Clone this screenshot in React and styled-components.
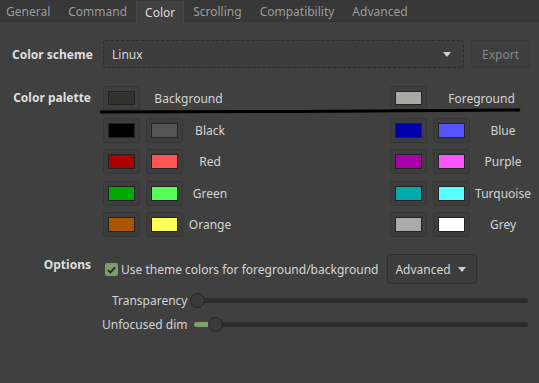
import React from "react";
import styled, { createGlobalStyle } from "styled-components";

const GlobalStyle = createGlobalStyle`
  html, body {
    margin: 0;
    padding: 0;
    background: #404040;
  }
  body {
    width: 539px;
    height: 383px;
    overflow: hidden;
    font-family: "Noto Sans", "Open Sans", sans-serif;
    font-size: 12px;
    color: #d2d2d2;
  }
`;

const Page = styled.div`
  position: relative;
  width: 539px;
  height: 383px;
  background: #404040;
  white-space: nowrap;
`;

const TabBar = styled.div`
  display: flex;
  height: 22px;
  background: #373737;
  border-bottom: 1px solid #343434;
  box-sizing: border-box;
`;

const Tab = styled.div`
  display: flex;
  align-items: center;
  padding: 0 8px;
  margin-top: 1px;
  color: ${({ $active }) => ($active ? "#dcdcdc" : "#9c9c9c")};
  background: ${({ $active }) => ($active ? "#404040" : "transparent")};
  border-left: 1px solid ${({ $active }) => ($active ? "#474747" : "transparent")};
  border-right: 1px solid ${({ $active }) => ($active ? "#474747" : "transparent")};
  margin-bottom: ${({ $active }) => ($active ? "-1px" : "0")};
  height: ${({ $active }) => ($active ? "22px" : "21px")};
  box-sizing: border-box;
  font-size: 12px;
  &:first-child {
    padding-left: 5px;
  }
`;

const Form = styled.div`
  display: grid;
  grid-template-columns: 79px 1fr;
  column-gap: 12px;
  padding: 18px 9px 0 12px;
`;

const Label = styled.div`
  text-align: right;
  font-weight: bold;
  color: #dedede;
  font-size: 12px;
  align-self: ${({ $top }) => ($top ? "start" : "center")};
  padding-top: ${({ $pad }) => $pad || 0}px;
`;

const SchemeRow = styled.div`
  display: flex;
  gap: 7px;
  height: 28px;
`;

const Combo = styled.div`
  flex: ${({ $grow }) => ($grow ? 1 : "none")};
  display: flex;
  align-items: center;
  justify-content: space-between;
  box-sizing: border-box;
  height: ${({ $h }) => $h || 28}px;
  padding: 0 12px 0 8px;
  background: #3d3d3d;
  border: 1px ${({ $focus }) => ($focus ? "dashed #2c2c2c" : "solid #303030")};
  border-radius: 3px;
  color: #d6d6d6;
  font-size: 12px;
`;

const Caret = styled.span`
  width: 0;
  height: 0;
  border-left: 4px solid transparent;
  border-right: 4px solid transparent;
  border-top: 5px solid #cfcfcf;
`;

const Button = styled.div`
  width: 59px;
  height: 28px;
  box-sizing: border-box;
  display: flex;
  align-items: center;
  justify-content: center;
  background: #3e3e3e;
  border: 1px solid #383838;
  border-radius: 3px;
  color: #878787;
  font-size: 12px;
`;

const Palette = styled.div`
  display: flex;
  justify-content: space-between;
  margin-top: 18px;
`;

const Group = styled.div`
  display: grid;
  grid-template-columns: 37px 37px ${({ $label }) => $label}px;
  column-gap: 6px;
  row-gap: 6.5px;
  grid-auto-rows: 25px;
`;

const SwatchButton = styled.div`
  box-sizing: border-box;
  width: 37px;
  height: ${({ $h }) => $h || 25}px;
  padding: 4px;
  background: #3d3d3d;
  border: 1px solid #353535;
  border-radius: 3px;
  align-self: start;
`;

const SwatchFill = styled.div`
  height: 100%;
  background: ${({ $color }) => $color};
  border: 1px solid #232323;
  box-sizing: border-box;
`;

const ColorName = styled.div`
  display: flex;
  align-items: center;
  justify-content: center;
  grid-column: ${({ $span }) => ($span ? "2 / 4" : "auto")};
  color: #d4d4d4;
  font-size: 12px;
`;

const OptionsRow = styled.div`
  display: flex;
  align-items: center;
  margin-top: 17px;
`;

const Check = styled.div`
  width: 13px;
  height: 13px;
  margin: 1px 3px 0 2px;
  border-radius: 2px;
  background: #7b9c69;
  display: flex;
  align-items: center;
  justify-content: center;
`;

const CheckText = styled.span`
  color: #d6d6d6;
  font-size: 12px;
`;

const AdvancedCombo = styled(Combo)`
  margin-left: 9px;
  width: 90px;
  padding: 0 10px 0 7px;
`;

const Sliders = styled.div`
  display: grid;
  grid-template-columns: auto 1fr;
  column-gap: 4px;
  grid-auto-rows: 20px;
  row-gap: 4px;
  margin-top: 6px;
  margin-left: -1px;
  padding-right: 2px;
`;

const SliderLabel = styled.div`
  text-align: right;
  align-self: center;
  color: #d4d4d4;
  font-size: 12px;
`;

const Track = styled.div`
  position: relative;
  align-self: center;
  height: 5px;
  border-radius: 3px;
  background: #2b2b2b;
  margin-left: 3px;
`;

const Fill = styled.div`
  position: absolute;
  left: 0;
  top: 0;
  bottom: 0;
  border-radius: 3px;
  background: #7ea06b;
`;

const Handle = styled.div`
  position: absolute;
  top: 50%;
  width: 15px;
  height: 15px;
  box-sizing: border-box;
  margin-top: -7.5px;
  margin-left: -7.5px;
  border-radius: 50%;
  background: #3a3a3a;
  border: 1px solid #262626;
`;

const Annotation = styled.svg`
  position: absolute;
  left: 0;
  top: 0;
  pointer-events: none;
`;

const leftColors = [
  ["Black", "#000000", "#555555"],
  ["Red", "#aa0000", "#ff5555"],
  ["Green", "#00aa00", "#55ff55"],
  ["Orange", "#aa5500", "#ffff55"],
];

const rightColors = [
  ["Blue", "#0000aa", "#5555ff"],
  ["Purple", "#aa00aa", "#ff55ff"],
  ["Turquoise", "#00aaaa", "#55ffff"],
  ["Grey", "#aaaaaa", "#ffffff"],
];

const tabs = ["General", "Command", "Color", "Scrolling", "Compatibility", "Advanced"];

const ColorGroup = ({ head, headColor, rows, labelWidth }) => (
  <Group $label={labelWidth}>
    <SwatchButton $h={24}>
      <SwatchFill $color={headColor} />
    </SwatchButton>
    <ColorName $span>{head}</ColorName>
    {rows.map(([name, normal, bright]) => (
      <React.Fragment key={name}>
        <SwatchButton>
          <SwatchFill $color={normal} />
        </SwatchButton>
        <SwatchButton>
          <SwatchFill $color={bright} />
        </SwatchButton>
        <ColorName>{name}</ColorName>
      </React.Fragment>
    ))}
  </Group>
);

const Slider = ({ value, fill }) => (
  <Track>
    {fill && <Fill style={{ width: `${value}px` }} />}
    <Handle style={{ left: `${value}px` }} />
  </Track>
);

export default function App() {
  return (
    <Page>
      <GlobalStyle />
      <TabBar>
        {tabs.map((t) => (
          <Tab key={t} $active={t === "Color"}>
            {t}
          </Tab>
        ))}
      </TabBar>
      <Form>
        <Label>Color scheme</Label>
        <SchemeRow>
          <Combo $grow $focus>
            <span>Linux</span>
            <Caret />
          </Combo>
          <Button>Export</Button>
        </SchemeRow>

        <Label $top $pad={21}>Color palette</Label>
        <Palette>
          <ColorGroup head="Background" headColor="#31332f" rows={leftColors} labelWidth={42} />
          <ColorGroup head="Foreground" headColor="#a9aaa5" rows={rightColors} labelWidth={54} />
        </Palette>

        <Label $top $pad={19}>Options</Label>
        <div>
          <OptionsRow>
            <Check>
              <svg width="9" height="8" viewBox="0 0 9 8">
                <path d="M1 4.2 L3.4 6.5 L8 1.3" fill="none" stroke="#262626" strokeWidth="1.8" />
              </svg>
            </Check>
            <CheckText>Use theme colors for foreground/background</CheckText>
            <AdvancedCombo $h={30}>
              <span>Advanced</span>
              <Caret />
            </AdvancedCombo>
          </OptionsRow>
          <Sliders>
            <SliderLabel>Transparency</SliderLabel>
            <Slider value={3} />
            <SliderLabel>Unfocused dim</SliderLabel>
            <Slider value={21} fill />
          </Sliders>
        </div>
      </Form>
      <Annotation width="539" height="383">
        <path d="M100 112 L300 111.5 L520 110" stroke="#000" strokeWidth="3" fill="none" />
        <path d="M100 112 L104 110 L104 114 Z" fill="#000" />
        <path d="M521 110 L516 108 L516 112 Z" fill="#000" />
      </Annotation>
    </Page>
  );
}
